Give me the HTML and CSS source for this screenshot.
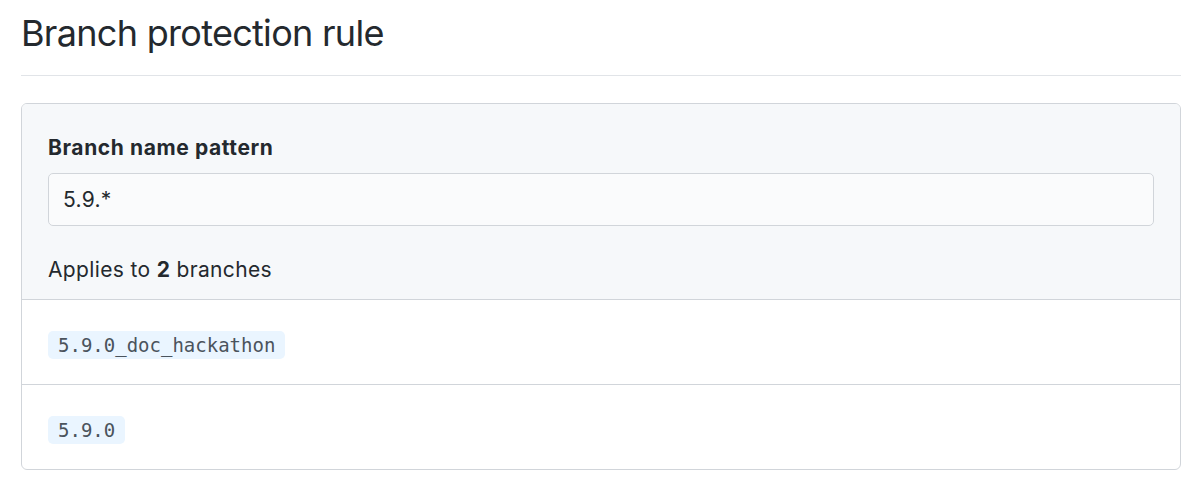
FILE: index.html
```html
<!doctype html>
<html lang="en">
<head>
	<meta charset="UTF-8" />
	<title>Branch protection rule</title>
	<link rel="stylesheet" href="styles.css">
</head>
<body>
	<div class="page">
		<div class="subhead">
			<h2 class="subhead-title">Branch protection rule</h2>
		</div>
		<div class="box">
			<div class="box-header">
				<label class="label" for="pattern">Branch name pattern</label>
				<input class="input" id="pattern" type="text" value="5.9.*" />
				<p class="applies">Applies to <strong>2</strong> branches</p>
			</div>
			<ul class="branches">
				<li><code>5.9.0_doc_hackathon</code></li>
				<li><code>5.9.0</code></li>
			</ul>
		</div>
	</div>
</body>
</html>
```

FILE: styles.css
```css
body{
	margin: 0;
	background: #fff;
	color: #24292e;
	font-family: Inter, "Liberation Sans", sans-serif;
}
.page{
	padding: 11px 19px 0 21px;
}
.subhead{
	padding-bottom: 19px;
	border-bottom: 1px solid #e1e4e8;
}
.subhead-title{
	margin: 0;
	font-size: 36px;
	font-weight: 400;
	line-height: 45px;
	letter-spacing: -0.7px;
}
.box{
	margin-top: 27px;
	border: 1px solid #d1d5da;
	border-radius: 6px;
	overflow: hidden;
}
.box-header{
	padding: 29px 26px 14px;
	background: #f6f8fa;
	border-bottom: 1px solid #d1d5da;
}
.label{
	display: block;
	font-size: 21px;
	font-weight: 700;
	line-height: 30px;
	letter-spacing: 0.6px;
}
.input{
	display: block;
	box-sizing: border-box;
	width: 100%;
	height: 53px;
	margin-top: 10px;
	padding: 0 14px;
	font-family: inherit;
	font-size: 21px;
	letter-spacing: 0.3px;
	color: #24292e;
	background: #fafbfc;
	border: 1px solid #d1d5da;
	border-radius: 5px;
	outline: none;
}
.applies{
	margin: 29px 0 0;
	font-size: 21px;
	line-height: 30px;
	letter-spacing: 0.35px;
}
.applies strong{
	font-weight: 700;
}
.branches{
	margin: 0;
	padding: 0;
	list-style: none;
}
.branches li{
	padding: 31px 26px 25px;
	border-top: 1px solid #d1d5da;
}
.branches li:first-child{
	border-top: 0;
}
.branches code{
	display: inline-block;
	vertical-align: top;
	padding: 4px 10px;
	font-family: "DejaVu Sans Mono", monospace;
	font-size: 19px;
	line-height: 20px;
	color: #4a535c;
	background: #eaf5ff;
	border-radius: 5px;
}
```
